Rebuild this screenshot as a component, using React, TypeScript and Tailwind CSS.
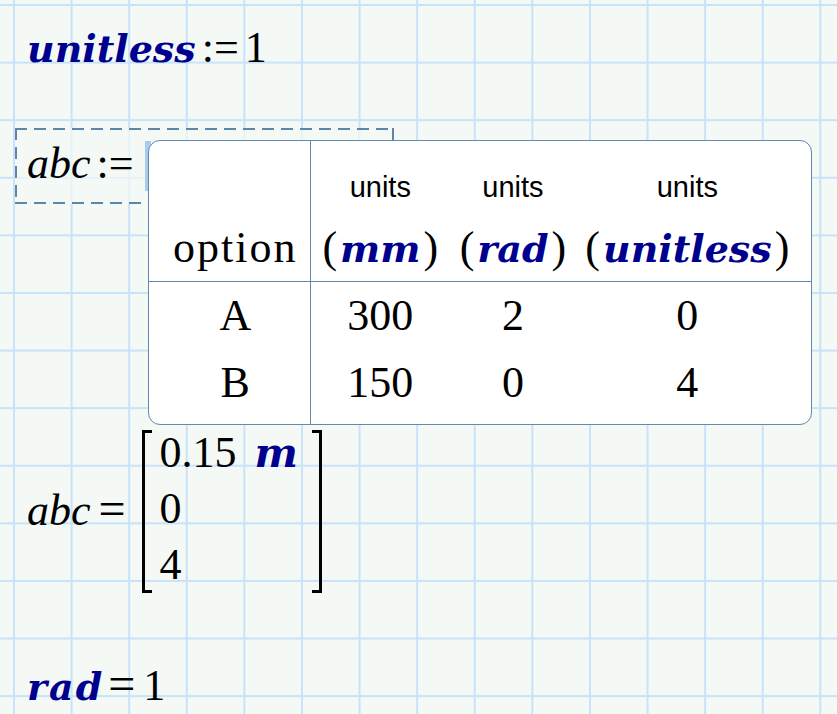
import React from "react";

const serif = "font-['Liberation_Serif',serif]";
const unitFont = "font-['DejaVu_Serif',serif] font-bold italic text-[#00008f]";

// dashed frame drawn with gradients so the dashes are long like the original
const dashed =
  "bg-[repeating-linear-gradient(90deg,#5d87a6_0_12px,transparent_12px_19px),repeating-linear-gradient(90deg,#5d87a6_0_12px,transparent_12px_19px),repeating-linear-gradient(180deg,#5d87a6_0_12px,transparent_12px_19px),repeating-linear-gradient(180deg,#5d87a6_0_12px,transparent_12px_19px)] bg-size-[100%_2px,100%_2px,2px_100%,2px_100%] bg-position-[0_0,0_100%,0_0,100%_0] bg-no-repeat";

function Unit({ children, className = "" }: { children: React.ReactNode; className?: string }) {
  return <span className={`${unitFont} text-[38px] ${className}`}>{children}</span>;
}

function Assign({ op }: { op: string }) {
  return <span className="mx-[6px]">{op}</span>;
}

function Cell({ children }: { children: React.ReactNode }) {
  return <div className="text-center">{children}</div>;
}

const cols = [
  { w: "w-[140px]", unit: "mm", vals: ["300", "150"] },
  { w: "w-[126px]", unit: "rad", vals: ["2", "0"] },
  { w: "w-[236px] pr-[12px]", unit: "unitless", vals: ["0", "4"] },
];

export default function App() {
  return (
    <div
      className={`relative h-[714px] w-[837px] overflow-hidden bg-[#f4f9f6] bg-[linear-gradient(to_right,#c8e2f8_2px,transparent_2px),linear-gradient(to_bottom,#c8e2f8_2px,transparent_2px)] bg-size-[57.6px_57.6px] bg-position-[13px_4px] text-black ${serif} text-[44px]`}
    >
      <div className="flex flex-col">
        {/* unitless := 1 */}
        <div className="mt-[26px] flex h-[44px] items-baseline pl-[27px] leading-none">
          <Unit>unitless</Unit>
          <Assign op=":=" />
          <span>1</span>
        </div>

        {/* abc := table */}
        <div className="relative mt-[58px] ml-[15px] h-[76px] w-[379px] bg-[#f4f9f6]/70">
          <div className={`absolute inset-0 ${dashed}`} />
          <div className="relative mt-[14px] flex items-baseline pl-[12px] leading-none">
            <span className="italic">abc</span>
            <Assign op=":=" />
          </div>
          <div className="absolute left-[130px] top-[13px] h-[50px] w-[6px] bg-[#a8ccef]" />

          {/* table popup */}
          <div className="absolute left-[133px] top-[12px] flex h-[285px] w-[664px] flex-col rounded-[12px] border border-[#5f8aab] bg-white">
            <div className="flex h-[141px] border-b border-[#5f8aab]">
              <div className="w-[162px] border-r border-[#5f8aab] pl-[12px] pt-[85px] text-center leading-none tracking-[2px]">
                option
              </div>
              {cols.map((c) => (
                <div key={c.unit} className={`${c.w} flex flex-col items-center pt-[32px]`}>
                  <div className="font-['Liberation_Sans',sans-serif] text-[29px] leading-none">units</div>
                  <div className="mt-[24px] flex items-baseline leading-none">
                    <span>(</span>
                    <Unit className="mx-[3px]">{c.unit}</Unit>
                    <span>)</span>
                  </div>
                </div>
              ))}
            </div>
            <div className="flex flex-1">
              <div className="w-[162px] border-r border-[#5f8aab] pl-[12px] leading-[67px]">
                <Cell>A</Cell>
                <Cell>B</Cell>
              </div>
              {cols.map((c) => (
                <div key={c.unit} className={`${c.w} leading-[67px]`}>
                  {c.vals.map((v, i) => (
                    <Cell key={i}>{v}</Cell>
                  ))}
                </div>
              ))}
            </div>
          </div>
        </div>

        {/* abc = matrix */}
        <div className="mt-[221px] flex h-[168px] items-start pl-[27px]">
          <div className="mt-[60px] flex items-baseline leading-none">
            <span className="italic">abc</span>
            <span className="ml-[8px] text-[48px]">=</span>
          </div>
          <div className="ml-[16px] mt-[5px] h-[163px] w-[10px] border-y-[3px] border-l-[3px] border-black" />
          <div className="ml-[8px] flex w-[152px] flex-col leading-[56px]">
            <div className="flex items-baseline">
              <span>0.15</span>
              <Unit className="ml-[18px] text-[41px]">m</Unit>
            </div>
            <div>0</div>
            <div>4</div>
          </div>
          <div className="mt-[5px] h-[163px] w-[10px] border-y-[3px] border-r-[3px] border-black" />
        </div>

        {/* rad = 1 */}
        <div className="mt-[67px] flex h-[44px] items-baseline pl-[27px] leading-none">
          <Unit className="tracking-[2px]">rad</Unit>
          <span className="ml-[4px] mr-[8px] text-[48px]">=</span>
          <span>1</span>
        </div>
      </div>
    </div>
  );
}
